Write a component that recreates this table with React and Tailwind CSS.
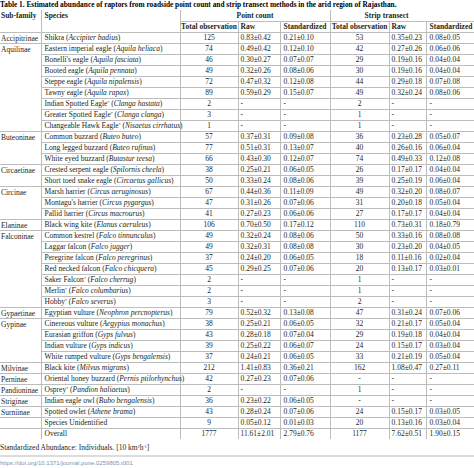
const GROUPS = [
    ["Accipitrinae", [
        ["Shikra", "Accipiter badius", false, "125", "0.83±0.42", "0.21±0.10", "53", "0.35±0.23", "0.08±0.05"],
    ]],
    ["Aquilinae", [
        ["Eastern imperial eagle", "Aquila heliaca", false, "74", "0.49±0.42", "0.12±0.10", "42", "0.27±0.26", "0.06±0.06"],
        ["Bonelli's eagle", "Aquila fasciata", false, "46", "0.30±0.27", "0.07±0.07", "29", "0.19±0.16", "0.04±0.04"],
        ["Booted eagle", "Aquila pennata", false, "49", "0.32±0.26", "0.08±0.06", "30", "0.19±0.16", "0.04±0.04"],
        ["Steppe eagle", "Aquila nipalensis", false, "72", "0.47±0.32", "0.12±0.08", "44", "0.29±0.18", "0.07±0.08"],
        ["Tawny eagle", "Aquila rapax", false, "89", "0.59±0.29", "0.15±0.07", "49", "0.32±0.24", "0.08±0.06"],
        ["Indian Spotted Eagle", "Clanga hastata", true, "2", "-", "-", "2", "-", "-"],
        ["Greater Spotted Eagle", "Clanga clanga", true, "3", "-", "-", "1", "-", "-"],
        ["Changeable Hawk Eagle", "Nisaetus cirrhatus", true, "1", "-", "-", "1", "-", "-"],
    ]],
    ["Buteoninae", [
        ["Common buzzard", "Buteo buteo", false, "57", "0.37±0.31", "0.09±0.08", "36", "0.23±0.28", "0.05±0.07"],
        ["Long legged buzzard", "Buteo rufinus", false, "77", "0.51±0.31", "0.13±0.07", "40", "0.26±0.16", "0.06±0.04"],
        ["White eyed buzzard", "Butastur teesa", false, "66", "0.43±0.30", "0.12±0.07", "74", "0.49±0.33", "0.12±0.08"],
    ]],
    ["Circaetinae", [
        ["Crested serpent eagle", "Spilornis cheela", false, "38", "0.25±0.21", "0.06±0.05", "26", "0.17±0.17", "0.04±0.04"],
        ["Short toed snake eagle", "Circaetus gallicus", false, "50", "0.33±0.24", "0.08±0.06", "39", "0.25±0.19", "0.06±0.04"],
    ]],
    ["Circinae", [
        ["Marsh harrier", "Circus aeruginosus", false, "67", "0.44±0.36", "0.11±0.09", "49", "0.32±0.20", "0.08±0.07"],
        ["Montagu's harrier", "Circus pygargus", false, "47", "0.31±0.26", "0.07±0.06", "31", "0.20±0.18", "0.05±0.04"],
        ["Pallid harrier", "Circus macrourus", false, "41", "0.27±0.23", "0.06±0.06", "27", "0.17±0.17", "0.04±0.04"],
    ]],
    ["Elaninae", [
        ["Black wing kite", "Elanus caeruleus", false, "106", "0.70±0.50", "0.17±0.12", "110", "0.73±0.31", "0.18±0.79"],
    ]],
    ["Falconinae", [
        ["Common kestrel", "Falco tinnunculus", false, "49", "0.32±0.24", "0.08±0.06", "50", "0.33±0.16", "0.08±0.08"],
        ["Laggar falcon", "Falco jugger", false, "49", "0.32±0.31", "0.08±0.08", "30", "0.23±0.20", "0.04±0.05"],
        ["Peregrine falcon", "Falco peregrinus", false, "37", "0.24±0.20", "0.06±0.05", "18", "0.11±0.16", "0.02±0.04"],
        ["Red necked falcon", "Falco chicquera", false, "45", "0.29±0.25", "0.07±0.06", "20", "0.13±0.17", "0.03±0.01"],
        ["Saker Falcon", "Falco cherrug", true, "2", "-", "-", "1", "-", "-"],
        ["Merlin", "Falco columbarius", true, "2", "-", "-", "1", "-", "-"],
        ["Hobby", "Falco severus", true, "3", "-", "-", "2", "-", "-"],
    ]],
    ["Gypaetinae", [
        ["Egyptian vulture", "Neophron percnopterus", false, "79", "0.52±0.32", "0.13±0.08", "47", "0.31±0.24", "0.07±0.06"],
    ]],
    ["Gypinae", [
        ["Cinereous vulture", "Aegypius monachus", false, "38", "0.25±0.21", "0.06±0.05", "32", "0.21±0.17", "0.05±0.04"],
        ["Eurasian griffon", "Gyps fulvus", false, "43", "0.28±0.18", "0.07±0.04", "29", "0.19±0.18", "0.04±0.04"],
        ["Indian vulture", "Gyps indicus", false, "39", "0.25±0.22", "0.06±0.07", "24", "0.15±0.17", "0.03±0.04"],
        ["White rumped vulture", "Gyps bengalensis", false, "37", "0.24±0.21", "0.06±0.05", "33", "0.21±0.19", "0.05±0.04"],
    ]],
    ["Milvinae", [
        ["Black kite", "Milvus migrans", false, "212", "1.41±0.83", "0.36±0.21", "162", "1.08±0.47", "0.27±0.11"],
    ]],
    ["Perninae", [
        ["Oriental honey buzzard", "Pernis ptilorhynchus", false, "42", "0.27±0.23", "0.07±0.06", "-", "-", "-"],
    ]],
    ["Pandioninae", [
        ["Osprey", "Pandion haliaetus", true, "2", "-", "-", "1", "-", "-"],
    ]],
    ["Striginae", [
        ["Indian eagle owl", "Bubo bengalensis", false, "36", "0.23±0.22", "0.06±0.05", "-", "-", "-"],
    ]],
    ["Surniinae", [
        ["Spotted owlet", "Athene brama", false, "43", "0.28±0.24", "0.07±0.06", "24", "0.15±0.17", "0.03±0.05"],
    ]],
    ["", [
        ["Species Unidentified", null, false, "9", "0.05±0.12", "0.01±0.03", "20", "0.13±0.16", "0.03±0.04"],
    ]],
    ["", [
        ["Overall", null, false, "1777", "11.61±2.01", "2.79±0.76", "1177", "7.62±0.51", "1.90±0.15"],
    ]],
];

const td = "border border-[#bdbdbd] p-0 h-[11px] leading-none whitespace-nowrap";

export default function App() {
    return (
        <div className="w-[474px] h-[468px] overflow-hidden bg-white text-[#231f20] text-[7.5px] font-['Liberation_Serif',serif]">
            <div className="h-[10px] pt-[1px] leading-[8px] text-[7.35px] font-bold text-black whitespace-nowrap">
                Table 1. Estimated abundance of raptors from roadside point count and strip transect methods in the arid region of Rajasthan.
            </div>

            <table className="w-[474px] table-fixed border-collapse border-hidden">
                <colgroup>
                    <col className="w-[41px]" />
                    <col className="w-[139px]" />
                    <col className="w-[58px]" />
                    <col className="w-[42px]" />
                    <col className="w-[50px]" />
                    <col className="w-[59px]" />
                    <col className="w-[37px]" />
                    <col className="w-[48px]" />
                </colgroup>
                <thead className="font-bold">
                    <tr>
                        <td rowSpan={2} className={`${td} align-top pl-[1px] pt-[2px]`}>Sub-family</td>
                        <td rowSpan={2} className={`${td} align-top pl-[3px] pt-[2px]`}>Species</td>
                        <td colSpan={3} className={`${td} text-center`}>Point count</td>
                        <td colSpan={3} className={`${td} pl-[34px]`}>Strip transect</td>
                    </tr>
                    <tr>
                        <td className={`${td} text-center`}>Total observation</td>
                        <td className={`${td} pl-[2px]`}>Raw</td>
                        <td className={`${td} pl-[3px]`}>Standardized</td>
                        <td className={`${td} text-center`}>Total observation</td>
                        <td className={`${td} pl-[2px]`}>Raw</td>
                        <td className={`${td} pl-[3px]`}>Standardized</td>
                    </tr>
                </thead>
                <tbody>
                    {GROUPS.map(([name, rows], g) =>
                        rows.map((r, i) => (
                            <tr key={`${g}-${i}`}>
                                {i === 0 && (
                                    <td rowSpan={rows.length} className={`${td} align-top pl-[1px] pt-[2px]`}>
                                        {name}
                                    </td>
                                )}
                                <td className={`${td} pl-[3px]`}>
                                    {r[0]}
                                    {r[2] && <sup className="text-[4px]">*</sup>}
                                    {r[1] && (
                                        <>
                                            {" ("}
                                            <i>{r[1]}</i>
                                            {")"}
                                        </>
                                    )}
                                </td>
                                <td className={`${td} text-center`}>{r[3]}</td>
                                <td className={`${td} pl-[2px]`}>{r[4]}</td>
                                <td className={`${td} pl-[3px]`}>{r[5]}</td>
                                <td className={`${td} text-center`}>{r[6]}</td>
                                <td className={`${td} pl-[2px]`}>{r[7]}</td>
                                <td className={`${td} pl-[3px]`}>{r[8]}</td>
                            </tr>
                        ))
                    )}
                </tbody>
            </table>

            <div className="mt-[5px] leading-[8px] whitespace-nowrap">
                Standardized Abundance: Individuals. [10 km<sup className="text-[4px]">2</sup>h<sup className="text-[4px]">-1</sup>]
            </div>
            <div className="mt-[3px] h-[2px] bg-[#dcdcdc]" />
            <div className="mt-[3px] leading-[6px] text-[6px] text-[#8093ad] font-['Liberation_Sans',sans-serif]">
                https://doi.org/10.1371/journal.pone.0259805.t001
            </div>
        </div>
    );
}
